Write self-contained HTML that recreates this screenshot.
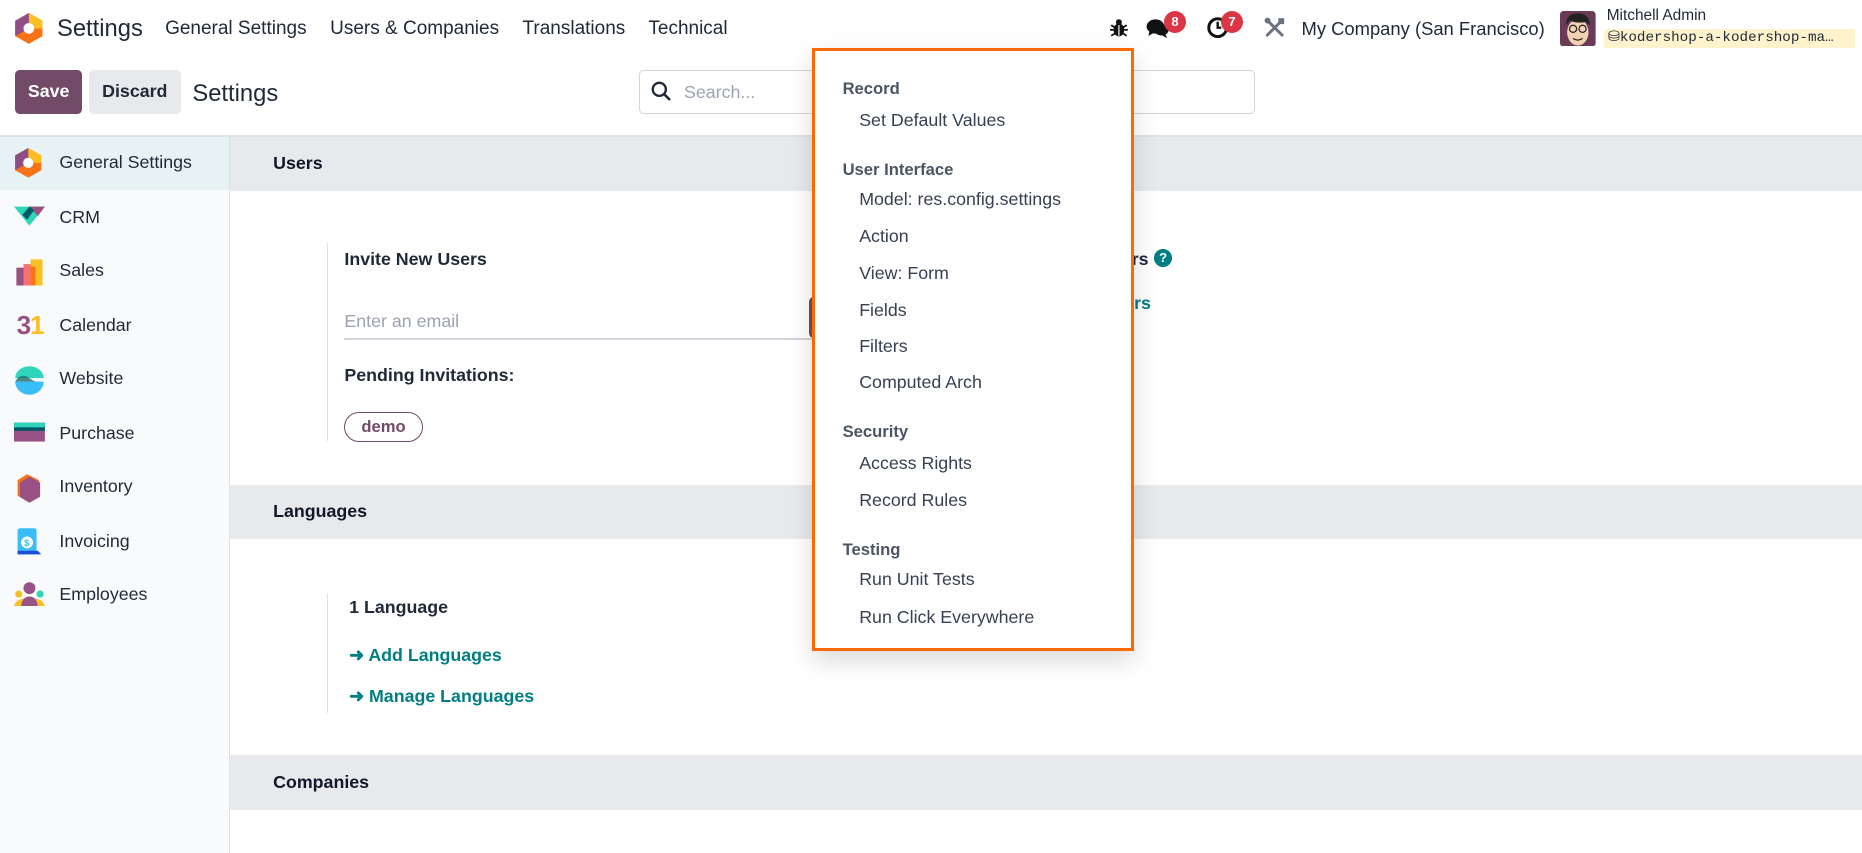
<!DOCTYPE html>
<html><head><meta charset="utf-8"><style>
*{box-sizing:border-box;margin:0;padding:0}
html,body{width:1862px;height:853px;overflow:hidden;background:#fff}
#w{zoom:1.1875;width:1568px;height:718px;position:relative;font-family:"Liberation Sans",sans-serif;color:#374151;overflow:hidden}
.a{position:absolute;white-space:nowrap}
.nav{font-size:16px;color:#1f2937;top:15px}
.sb{position:absolute;left:0;top:115px;width:194px;height:603px;background:#f9fafb;border-right:1px solid #dee2e6}
.si{position:absolute;left:0;width:193px;height:45px}
.si span{position:absolute;left:50px;top:13px;font-size:15px;color:#1f2937}
.si svg{position:absolute;left:12px;top:10px}
.hdr{position:absolute;left:194px;width:1374px;height:46px;background:#e7e9ed}
.hdr b{position:absolute;left:36px;top:14px;font-size:15px;color:#111827}
.dd{position:absolute;left:684px;top:40px;width:271px;height:508px;background:#fff;border:3px solid #ff6a00;box-shadow:0 8px 20px rgba(0,0,0,.15)}
.dh{position:absolute;left:23px;font-size:14px;font-weight:bold;color:#4b5563}
.di{position:absolute;left:37px;font-size:15px;color:#374151}
.tl{color:#017e84;font-weight:bold;font-size:15px}
</style></head><body><div id="w">
<svg class="a" style="left:12px;top:11px" width="25" height="26" viewBox="0 0 25 26"><polygon points="12.5,0 24,6.5 24,19.5 12.5,26 1,19.5 1,6.5" fill="#f97316"/><polygon points="12.5,0 24,6.5 24,13 12.5,13" fill="#fbbf24"/><polygon points="12.5,0 1,6.5 1,19.5 12.5,13" fill="#8f4f86"/><circle cx="12.5" cy="13" r="4.5" fill="#fff"/></svg>
<div class="a" style="left:48px;top:13px;font-size:20px;color:#1f2937">Settings</div>
<div class="a nav" style="left:139px">General Settings</div>
<div class="a nav" style="left:278px">Users &amp; Companies</div>
<div class="a nav" style="left:440px">Translations</div>
<div class="a nav" style="left:546px">Technical</div>
<svg class="a" style="left:935px;top:15px" width="15" height="16" viewBox="0 0 15 16"><ellipse cx="7.5" cy="10" rx="4.5" ry="5.5" fill="#111"/><circle cx="7.5" cy="3.5" r="2.5" fill="#111"/><path d="M1 6l3 2M14 6l-3 2M0 10h3M15 10h-3M1 15l3-2M14 15l-3-2" stroke="#111" stroke-width="1.5"/><path d="M7.5 6v9" stroke="#fff" stroke-width="1"/></svg>
<svg class="a" style="left:965px;top:14px" width="22" height="20" viewBox="0 0 22 20"><ellipse cx="8" cy="8" rx="7.5" ry="6" fill="#111"/><path d="M3 12l-1 4 5-3z" fill="#111"/><ellipse cx="13" cy="11" rx="6" ry="4.5" fill="#111"/><path d="M16 14l2 4-5-3z" fill="#111"/></svg>
<div class="a" style="left:980px;top:9px;width:19px;height:19px;border-radius:50%;background:#dc3545;color:#fff;font-size:11px;font-weight:bold;text-align:center;line-height:19px">8</div>
<svg class="a" style="left:1016px;top:14px" width="18" height="18" viewBox="0 0 18 18"><circle cx="9" cy="9" r="7.5" fill="none" stroke="#111" stroke-width="2.5"/><path d="M9 4v5h3" stroke="#111" stroke-width="2" fill="none"/></svg>
<div class="a" style="left:1028px;top:9px;width:19px;height:19px;border-radius:50%;background:#dc3545;color:#fff;font-size:11px;font-weight:bold;text-align:center;line-height:19px">7</div>
<svg class="a" style="left:1064px;top:14px" width="18" height="18" viewBox="0 0 18 18"><path d="M2 2l14 14M16 2L2 16" stroke="#6b7280" stroke-width="2.5"/><circle cx="3" cy="3" r="2.5" fill="#6b7280"/><rect x="12" y="1" width="5" height="5" fill="#6b7280"/></svg>
<div class="a" style="left:1096px;top:15px;font-size:15.5px;color:#1f2937">My Company (San Francisco)</div>
<svg class="a" style="left:1314px;top:9px" width="30" height="30" viewBox="0 0 30 30"><rect width="30" height="30" rx="3" fill="#6b3a57"/><ellipse cx="15" cy="18" rx="9" ry="11" fill="#f3d2b3"/><path d="M5 12q0-10 10-10t10 10l-3-3q-7 2-14-1z" fill="#222"/><circle cx="11" cy="15" r="3" fill="none" stroke="#222"/><circle cx="19" cy="15" r="3" fill="none" stroke="#222"/><path d="M11 23q4 3 8 0" stroke="#222" fill="none"/></svg>
<div class="a" style="left:1353px;top:6px;font-size:13px;color:#1f2937">Mitchell Admin</div>
<div class="a" style="left:1351px;top:24px;width:211px;height:16px;background:#fff3cd;font-family:'Liberation Mono',monospace;font-size:12px;color:#1f2937;line-height:16px;padding-left:3px">&#9921;kodershop-a-kodershop-ma…</div>
<div class="a" style="left:13px;top:59px;width:56px;height:37px;background:#714b67;border-radius:4px;color:#fff;font-weight:bold;font-size:15px;text-align:center;line-height:37px">Save</div>
<div class="a" style="left:75px;top:59px;width:77px;height:37px;background:#e7e9ed;border-radius:4px;color:#1f2937;font-weight:bold;font-size:15px;text-align:center;line-height:37px">Discard</div>
<div class="a" style="left:162px;top:67px;font-size:20px;color:#1f2937">Settings</div>
<div class="a" style="left:538px;top:59px;width:519px;height:37px;border:1px solid #d1d5db;border-radius:4px"></div>
<svg class="a" style="left:548px;top:68px" width="18" height="18" viewBox="0 0 18 18"><circle cx="7" cy="7" r="5.5" fill="none" stroke="#1f2937" stroke-width="2"/><path d="M11 11l5 5" stroke="#1f2937" stroke-width="2.2"/></svg>
<div class="a" style="left:576px;top:69px;font-size:15px;color:#9ca3af">Search...</div>
<div class="a" style="left:0;top:114px;width:1568px;height:1px;background:#dee2e6"></div>
<div class="sb">
<div class="si" style="top:0;background:#e6f2f3"><svg width="24" height="25" viewBox="0 0 25 26"><polygon points="12.5,0 24,6.5 24,19.5 12.5,26 1,19.5 1,6.5" fill="#f97316"/><polygon points="12.5,0 24,6.5 24,13 12.5,13" fill="#fbbf24"/><polygon points="12.5,0 1,6.5 1,19.5 12.5,13" fill="#8f4f86"/><circle cx="12.5" cy="13" r="4.5" fill="#fff"/></svg><span>General Settings</span></div>
<div class="si" style="top:46px"><svg width="26" height="22" viewBox="0 0 26 22"><path d="M0 3h26l-13 16z" fill="#2ed5b8"/><path d="M13 3h13l-6 8z" fill="#985184"/><path d="M7 10l6-7 4 3-6 8z" fill="#015a67"/></svg><span>CRM</span></div>
<div class="si" style="top:91px"><svg width="26" height="25" viewBox="0 0 26 25"><rect x="2" y="9" width="8" height="15" fill="#985184"/><rect x="8" y="6" width="8" height="18" fill="#f87171"/><rect x="14" y="2" width="10" height="22" fill="#fbbf24"/><rect x="14" y="8" width="4" height="16" fill="#f97316"/></svg><span>Sales</span></div>
<div class="si" style="top:137px"><div style="position:absolute;left:14px;top:9px;font-size:22px;font-weight:bold;color:#985184;letter-spacing:-1px">3<span style="position:static;color:#fbbf24;font-size:22px">1</span></div><span>Calendar</span></div>
<div class="si" style="top:182px"><svg width="26" height="26" viewBox="0 0 26 26"><path d="M1 11a12 10 0 0 1 24 0z" fill="#2ed5b8"/><path d="M1 14a12 11 0 0 0 24 0z" fill="#38bdf8"/><path d="M3 11q5-4 10 0t10 3H1z" fill="#1d6f6a" opacity=".8"/></svg><span>Website</span></div>
<div class="si" style="top:228px"><svg width="26" height="22" viewBox="0 0 26 22"><rect x="0" y="3" width="26" height="16" fill="#985184"/><rect x="0" y="3" width="26" height="5" fill="#2ed5b8"/><rect x="0" y="7" width="26" height="3" fill="#015a67"/></svg><span>Purchase</span></div>
<div class="si" style="top:273px"><svg width="26" height="26" viewBox="0 0 26 26"><polygon points="11,1 21,6 21,19 11,24 3,19 3,6" fill="#f97316"/><polygon points="13,3 22,8 22,20 13,25 5,20 5,8" fill="#985184"/></svg><span>Inventory</span></div>
<div class="si" style="top:319px"><svg width="26" height="26" viewBox="0 0 26 26"><rect x="3" y="1" width="16" height="22" rx="2" fill="#38bdf8"/><path d="M3 23h20l-3-3H3z" fill="#1d4ed8"/><circle cx="11" cy="13" r="5" fill="#fff"/><text x="8.5" y="16" font-size="8" font-weight="bold" fill="#38bdf8" font-family="Liberation Sans">$</text></svg><span>Invoicing</span></div>
<div class="si" style="top:364px"><svg width="26" height="24" viewBox="0 0 26 24"><circle cx="13" cy="6" r="5" fill="#985184"/><circle cx="4" cy="11" r="3" fill="#fbbf24"/><circle cx="22" cy="11" r="3" fill="#2ed5b8"/><path d="M0 21q2-6 8-6h10q6 0 8 6z" fill="#fbbf24"/><path d="M6 21q1-8 7-8t7 8z" fill="#985184"/></svg><span>Employees</span></div>
</div>
<div class="hdr" style="top:115px"><b>Users</b></div>
<div class="a" style="left:275px;top:205px;width:1px;height:166px;background:#dee2e6"></div>
<div class="a" style="left:290px;top:210px;font-size:15px;font-weight:bold;color:#1f2937">Invite New Users</div>
<div class="a" style="left:290px;top:262px;font-size:15px;color:#9ca3af">Enter an email</div>
<div class="a" style="left:290px;top:285px;width:395px;height:1px;background:#d1d5db"></div>
<div class="a" style="left:681px;top:250px;width:10px;height:35px;background:#714b67;border-radius:4px 0 0 4px"></div>
<div class="a" style="left:290px;top:307px;font-size:15px;font-weight:bold;color:#1f2937">Pending Invitations:</div>
<div class="a" style="left:290px;top:347px;width:66px;height:25px;border:1px solid #714b67;border-radius:13px;color:#714b67;font-weight:bold;font-size:14px;text-align:center;line-height:23px">demo</div>
<div class="a" style="left:953px;top:210px;font-size:15px;font-weight:bold;color:#1f2937">rs</div>
<div class="a" style="left:972px;top:210px;width:15px;height:15px;border-radius:50%;background:#017e84;color:#fff;font-size:11px;font-weight:bold;text-align:center;line-height:15px">?</div>
<div class="a tl" style="left:955px;top:247px">rs</div>
<div class="hdr" style="top:408px"><b>Languages</b></div>
<div class="a" style="left:275px;top:500px;width:1px;height:100px;background:#dee2e6"></div>
<div class="a" style="left:294px;top:503px;font-size:15px;font-weight:bold;color:#1f2937">1 Language</div>
<div class="a tl" style="left:294px;top:543px">➜ Add Languages</div>
<div class="a tl" style="left:294px;top:578px">➜ Manage Languages</div>
<div class="hdr" style="top:636px"><b>Companies</b></div>
<div class="dd">
<div class="dh" style="top:24px">Record</div>
<div class="di" style="top:50px">Set Default Values</div>
<div class="dh" style="top:92px">User Interface</div>
<div class="di" style="top:117px">Model: res.config.settings</div>
<div class="di" style="top:148px">Action</div>
<div class="di" style="top:179px">View: Form</div>
<div class="di" style="top:210px">Fields</div>
<div class="di" style="top:240px">Filters</div>
<div class="di" style="top:271px">Computed Arch</div>
<div class="dh" style="top:313px">Security</div>
<div class="di" style="top:339px">Access Rights</div>
<div class="di" style="top:370px">Record Rules</div>
<div class="dh" style="top:412px">Testing</div>
<div class="di" style="top:437px">Run Unit Tests</div>
<div class="di" style="top:469px">Run Click Everywhere</div>
</div>
</div></body></html>
